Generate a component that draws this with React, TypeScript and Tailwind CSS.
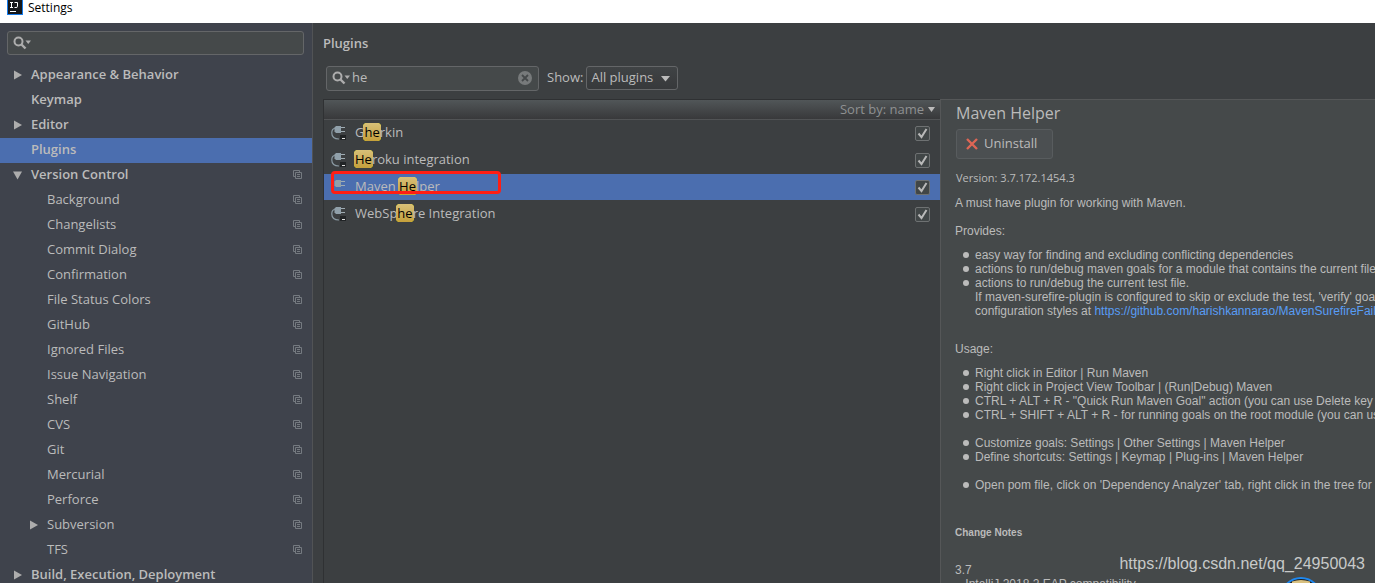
import { useState } from 'react';
import type { ReactNode } from 'react';

interface TreeItem {
    label: string;
    level?: number;
    arrow?: 'right' | 'down';
    project?: boolean;
}

interface Plugin {
    name: string;
    match: number;
}

const TREE: TreeItem[] = [
    { label: 'Appearance & Behavior', arrow: 'right' },
    { label: 'Keymap' },
    { label: 'Editor', arrow: 'right' },
    { label: 'Plugins' },
    { label: 'Version Control', arrow: 'down', project: true },
    { label: 'Background', level: 1, project: true },
    { label: 'Changelists', level: 1, project: true },
    { label: 'Commit Dialog', level: 1, project: true },
    { label: 'Confirmation', level: 1, project: true },
    { label: 'File Status Colors', level: 1, project: true },
    { label: 'GitHub', level: 1, project: true },
    { label: 'Ignored Files', level: 1, project: true },
    { label: 'Issue Navigation', level: 1, project: true },
    { label: 'Shelf', level: 1, project: true },
    { label: 'CVS', level: 1, project: true },
    { label: 'Git', level: 1, project: true },
    { label: 'Mercurial', level: 1, project: true },
    { label: 'Perforce', level: 1, project: true },
    { label: 'Subversion', level: 1, arrow: 'right', project: true },
    { label: 'TFS', level: 1, project: true },
    { label: 'Build, Execution, Deployment', arrow: 'right' },
];

// match = index where the search text starts
const PLUGINS: Plugin[] = [
    { name: 'Gherkin', match: 1 },
    { name: 'Heroku integration', match: 0 },
    { name: 'Maven Helper', match: 6 },
    { name: 'WebSphere Integration', match: 5 },
];

function SearchIcon() {
    return (
        <svg width="18" height="14" viewBox="0 0 18 14" className="shrink-0" fill="none">
            <circle cx="5.5" cy="5.5" r="4" stroke="#adadad" strokeWidth="2" />
            <path d="M8.5 8.5l4 4" stroke="#adadad" strokeWidth="2.4" />
            <path d="M12.5 4.5h5.5l-2.75 3.5z" fill="#adadad" />
        </svg>
    );
}

function TreeArrow({ dir }: { dir: 'right' | 'down' }) {
    return (
        <svg width="10" height="10" viewBox="0 0 10 10" fill="#adadad">
            {dir === 'right' ? <path d="M2 .5v9L10 5z" /> : <path d="M1 1.500h9L5.500 9.500z" />}
        </svg>
    );
}

function ProjectIcon() {
    return (
        <svg width="9" height="9" viewBox="0 0 9 9" fill="none" stroke="#757a80" className="shrink-0">
            <path d="M2.5 6.5h-2v-6h6v2" />
            <path d="M2.5 2.5h6v6h-6zM4 4.5h3M4 6.5h3" />
        </svg>
    );
}

function PlugIcon({ selected }: { selected: boolean }) {
    return (
        <svg width="16" height="16" viewBox="0 0 16 16" className="shrink-0">
            <path d="M5 1h5v7H5L3.500 6.500v-4z" fill="#90a0aa" />
            <path d="M10 2h4v1h-4zM10 6h4v1h-4z" fill="#a0acb3" />
            {!selected && (
                <>
                    <path d="M4 3.500C1.500 3.500 .8 5.500 .8 8c0 3.500 2 6 7.200 6" stroke="#8b9aa3" strokeWidth="1.200" fill="none" />
                    <path d="M9 10h6v5H9z" fill="#212426" />
                    <path d="M11 13h3v1h-3z" fill="#e0e0e0" />
                </>
            )}
        </svg>
    );
}

function PluginRow({ plugin, selected, onSelect }: { plugin: Plugin; selected: boolean; onSelect: () => void }) {
    const [enabled, setEnabled] = useState(true);
    const { name, match } = plugin;

    return (
        <li
            onClick={onSelect}
            className={`mb-px flex h-[26px] items-center pl-[7px] pr-2.5 ${selected ? 'bg-[#4b6eaf]' : ''}`}
        >
            <PlugIcon selected={selected} />
            <span className="ml-2 flex-1 pb-0.5 leading-4">
                {name.slice(0, match)}
                <mark className="-mx-px rounded-sm bg-linear-to-b from-[#d8c078] to-[#c5a03a] px-px text-black">
                    {name.slice(match, match + 2)}
                </mark>
                {name.slice(match + 2)}
            </span>
            <label className="relative flex size-[15px]">
                <input
                    type="checkbox"
                    aria-label={`Enable ${name}`}
                    checked={enabled}
                    onChange={() => setEnabled(!enabled)}
                    className="size-[15px] appearance-none rounded-xs border border-[#6e7172] bg-[#414647]"
                />
                {enabled && (
                    <svg viewBox="0 0 15 15" className="pointer-events-none absolute inset-0" fill="none">
                        <path d="M3.500 7.500l3 3.500 5-8" stroke="#b9b9b9" strokeWidth="2" />
                    </svg>
                )}
            </label>
        </li>
    );
}

function Bullet({ children }: { children: ReactNode }) {
    return (
        <li className="flex whitespace-nowrap">
            <span className="mr-1.5 mt-1 size-1.5 shrink-0 rounded-full bg-[#bbbbbb]" />
            <div>{children}</div>
        </li>
    );
}

function Details() {
    return (
        <section className="min-w-0 flex-1 overflow-hidden border-l border-t border-[#555758] bg-[#45494a] pl-3.5">
            <div className="pl-px">
                <h2 className="mt-0.5 text-base leading-[22px]">Maven Helper</h2>
                <button className="mt-[5px] flex h-[30px] w-[97px] items-center rounded-[3px] border border-[#585c5e] bg-[#4b4f51] pl-[9px] text-[13px]">
                    <svg width="12" height="12" viewBox="0 0 12 12" stroke="#dd6655" strokeWidth="2.400" className="mr-1.5">
                        <path d="M1 1l10 10M11 1L1 11" />
                    </svg>
                    Uninstall
                </button>
                <p className="mt-[11px] text-[11px] leading-4">Version: 3.7.172.1454.3</p>
            </div>

            <div className="mt-2.5 font-['Liberation_Sans',Arial,sans-serif] text-xs leading-[14px]">
                <p>A must have plugin for working with Maven.</p>
                <p className="mt-3.5">Provides:</p>
                <ul className="mt-2.5 pl-2">
                    <Bullet>easy way for finding and excluding conflicting dependencies</Bullet>
                    <Bullet>actions to run/debug maven goals for a module that contains the current file</Bullet>
                    <Bullet>
                        actions to run/debug the current test file.
                        <br />
                        If maven-surefire-plugin is configured to skip or exclude the test, 'verify' goal
                        <br />
                        configuration styles at{' '}
                        <a href="#surefire" className="text-[#589df6]">
                            https://github.com/harishkannarao/MavenSurefireFailsafe
                        </a>
                    </Bullet>
                </ul>
                <p className="mt-6">Usage:</p>
                <ul className="mt-2.5 pl-2">
                    <Bullet>Right click in Editor | Run Maven</Bullet>
                    <Bullet>Right click in Project View Toolbar | (Run|Debug) Maven</Bullet>
                    <Bullet>CTRL + ALT + R - "Quick Run Maven Goal" action (you can use Delete key</Bullet>
                    <Bullet>CTRL + SHIFT + ALT + R - for running goals on the root module (you can use</Bullet>
                </ul>
                <ul className="mt-3.5 pl-2">
                    <Bullet>Customize goals: Settings | Other Settings | Maven Helper</Bullet>
                    <Bullet>Define shortcuts: Settings | Keymap | Plug-ins | Maven Helper</Bullet>
                </ul>
                <ul className="mt-3.5 pl-2">
                    <Bullet>Open pom file, click on 'Dependency Analyzer' tab, right click in the tree for</Bullet>
                </ul>
                <h3 className="mt-[34px] text-[10px] font-bold">Change Notes</h3>
                <p className="mt-[23px]">3.7</p>
                <p className="pl-[3px]">- IntelliJ 2018.2 EAP compatibility</p>
            </div>
        </section>
    );
}

export default function App() {
    const [section, setSection] = useState('Plugins');
    const [selected, setSelected] = useState('Maven Helper');
    const [query, setQuery] = useState('he');

    return (
        <div className="relative flex h-screen flex-col overflow-hidden bg-[#3c3f41] font-['Open_Sans','Noto_Sans_CJK_SC',sans-serif] text-[13px] text-[#bbbbbb]">
            <header className="flex h-[23px] shrink-0 items-start bg-white pl-[7px] text-xs text-black">
                <svg width="16" height="15" viewBox="0 0 16 15">
                    <path d="M0 0h16v15H0z" fill="#167bea" />
                    <path d="M1 0h14v14H1z" fill="#15171a" />
                    <path d="M3 2.500h3M4.500 2.500v5M3 7.500h3M7.500 2.500h3v4q0 1-1.500 1H7.500M3 11.500h6" stroke="#fff" fill="none" />
                </svg>
                <h1 className="ml-[5px] leading-4">Settings</h1>
            </header>

            <div className="flex min-h-0 flex-1">
                <nav className="w-[313px] shrink-0 border-r border-[#515355] bg-[#3f434c] pt-2">
                    <label className="mx-[7px] mr-2 flex h-6 items-center rounded-[3px] border border-[#646668] bg-[#45494a] pl-[5px]">
                        <SearchIcon />
                        <input type="text" aria-label="Search settings" className="min-w-0 flex-1 outline-none" />
                    </label>
                    <ul className="mt-2">
                        {TREE.map((item) => (
                            <li key={item.label}>
                                <button
                                    onClick={() => setSection(item.label)}
                                    className={`flex h-[25px] w-full items-center pb-0.5 pr-2.5 ${
                                        item.level ? 'pl-7' : 'pl-3 font-semibold'
                                    } ${section === item.label ? 'bg-[#4b6eaf]' : ''}`}
                                >
                                    <span className="w-[19px] shrink-0">{item.arrow && <TreeArrow dir={item.arrow} />}</span>
                                    <span className="flex-1 text-left">{item.label}</span>
                                    {item.project && <ProjectIcon />}
                                </button>
                            </li>
                        ))}
                    </ul>
                </nav>

                <main className="flex min-w-0 flex-1 flex-col pl-2.5">
                    <h2 className="mt-2.5 font-semibold leading-5">Plugins</h2>
                    <div className="mt-3 flex h-[26px] items-center pl-[3px]">
                        <label className="flex h-[25px] w-[213px] items-center rounded-[3px] border border-[#646668] bg-[#45494a] pl-[5px] pr-1.5">
                            <SearchIcon />
                            <input
                                type="text"
                                aria-label="Search plugins"
                                value={query}
                                onChange={(e) => setQuery(e.target.value)}
                                className="ml-0.5 min-w-0 flex-1 outline-none"
                            />
                            <button aria-label="Clear" onClick={() => setQuery('')}>
                                <svg width="14" height="14" viewBox="0 0 14 14">
                                    <circle cx="7" cy="7" r="7" fill="#777a7b" />
                                    <path d="M4 4l6 6M10 4l-6 6" stroke="#45494a" strokeWidth="1.800" />
                                </svg>
                            </button>
                        </label>
                        <label htmlFor="show" className="ml-2">Show:</label>
                        <div className="relative ml-[3px]">
                            <select
                                id="show"
                                className="h-6 w-[92px] appearance-none rounded-[3px] border border-[#646668] bg-linear-to-b from-[#404345] to-[#37393b] pl-1 outline-none"
                            >
                                <option>All plugins</option>
                            </select>
                            <svg width="9" height="6" viewBox="0 0 9 6" className="pointer-events-none absolute right-2 top-2.5">
                                <path d="M0 0h9L4.500 5.500z" fill="#bbbbbb" />
                            </svg>
                        </div>
                    </div>

                    <div className="mt-2 flex min-h-0 flex-1">
                        <section className="w-[617px] shrink-0 border-l border-t border-[#2f3133]">
                            <div className="flex h-5 items-center justify-end border-b border-[#515355] bg-linear-to-b from-[#515658] to-[#38393b] pr-[5px]">
                                <button className="flex items-center text-[#8f9192]">
                                    Sort by: name
                                    <svg width="7" height="5" viewBox="0 0 7 5" className="ml-1">
                                        <path d="M0 0h7L3.500 5z" fill="#bbbbbb" />
                                    </svg>
                                </button>
                            </div>
                            <ul className="relative">
                                {PLUGINS.map((plugin) => (
                                    <PluginRow
                                        key={plugin.name}
                                        plugin={plugin}
                                        selected={selected === plugin.name}
                                        onSelect={() => setSelected(plugin.name)}
                                    />
                                ))}
                                <li className="pointer-events-none absolute left-[7px] top-[51px] h-[23px] w-[170px] rounded-sm border-[3px] border-[#ff1e14]" />
                            </ul>
                        </section>
                        <Details />
                    </div>
                </main>
            </div>

            {/* Watermark */}
            <div className="absolute bottom-[7px] right-2.5 font-['Liberation_Sans',Arial,sans-serif] text-base text-[#c8c9c9]">
                https://blog.csdn.net/qq_24950043
            </div>
            <svg width="36" height="6" viewBox="0 0 36 6" className="absolute bottom-0 right-14">
                <circle cx="18" cy="21" r="20" fill="#222" stroke="#1e88f0" strokeWidth="2" />
                <path d="M9 6V4.500q9-3 18 0V6z" fill="#d8c080" />
            </svg>
        </div>
    );
}
